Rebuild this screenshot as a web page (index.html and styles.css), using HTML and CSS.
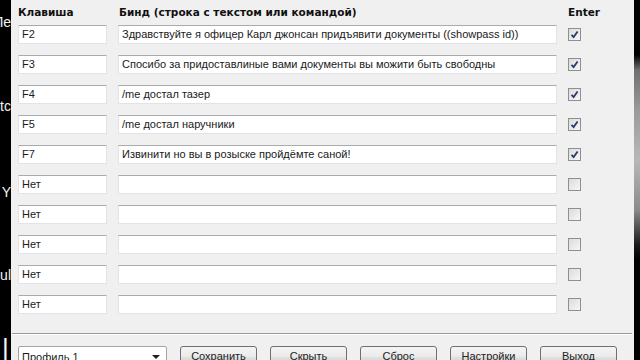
FILE: index.html
```html
<!DOCTYPE html>
<html lang="ru">
<head>
    <meta charset="UTF-8">
    <meta name="viewport" content="width=device-width, initial-scale=1.0">
    <title>Биндер</title>
    <link rel="stylesheet" href="styles.css">
</head>
<body>
    <div class="game-edge">
        <span class="frag frag-1">Пе</span>
        <span class="frag frag-2">tc</span>
        <span class="frag frag-3">Y</span>
        <span class="frag frag-4">ul</span>
        <span class="frag frag-5">|</span>
    </div>

    <div class="dialog">
        <div class="head-row">
            <span class="col-key">Клавиша</span>
            <span class="col-bind">Бинд (строка с текстом или командой)</span>
            <span class="col-enter">Enter</span>
        </div>

        <div class="bind-grid">
            <div class="field">F2</div>
            <div class="field">Здравствуйте я офицер Карл джонсан придъявити документы ((showpass id))</div>
            <div class="check checked"><svg viewBox="0 0 9 9"><path d="M1.5 4.8 L3.6 7 L7.6 1.4" /></svg></div>

            <div class="field">F3</div>
            <div class="field">Спосибо за придоставлиные вами документы вы можити быть свободны</div>
            <div class="check checked"><svg viewBox="0 0 9 9"><path d="M1.5 4.8 L3.6 7 L7.6 1.4" /></svg></div>

            <div class="field">F4</div>
            <div class="field">/me достал тазер</div>
            <div class="check checked"><svg viewBox="0 0 9 9"><path d="M1.5 4.8 L3.6 7 L7.6 1.4" /></svg></div>

            <div class="field">F5</div>
            <div class="field">/me достал наручники</div>
            <div class="check checked"><svg viewBox="0 0 9 9"><path d="M1.5 4.8 L3.6 7 L7.6 1.4" /></svg></div>

            <div class="field">F7</div>
            <div class="field">Извинити но вы в розыске пройдёмте саной!</div>
            <div class="check checked"><svg viewBox="0 0 9 9"><path d="M1.5 4.8 L3.6 7 L7.6 1.4" /></svg></div>

            <div class="field">Нет</div>
            <div class="field"></div>
            <div class="check"></div>

            <div class="field">Нет</div>
            <div class="field"></div>
            <div class="check"></div>

            <div class="field">Нет</div>
            <div class="field"></div>
            <div class="check"></div>

            <div class="field">Нет</div>
            <div class="field"></div>
            <div class="check"></div>

            <div class="field">Нет</div>
            <div class="field"></div>
            <div class="check"></div>
        </div>

        <div class="footer">
            <div class="profile">
                <span>Профиль 1</span>
                <span class="arrow"></span>
            </div>
            <div class="btn">Сохранить</div>
            <div class="btn">Скрыть</div>
            <div class="btn">Сброс</div>
            <div class="btn">Настройки</div>
            <div class="btn">Выход</div>
        </div>
    </div>

    <div class="right-edge"></div>
</body>
</html>
```

FILE: styles.css
```css
body {
    margin: 0;
    padding: 0;
    width: 640px;
    height: 360px;
    overflow: hidden;
    background-color: #000000;
    display: flex;
    font-family: "Liberation Sans", Arial, sans-serif;
    font-size: 11px;
    color: #1a1a1a;
}

/* кусок игры слева */
.game-edge {
    width: 11px;
    flex-shrink: 0;
    display: flex;
    flex-direction: column;
    overflow: hidden;
    color: #f4f4f4;
    font-size: 14px;
}

.frag {
    display: flex;
    justify-content: flex-end;
    white-space: nowrap;
    height: 16px;
    flex-shrink: 0;
}

.frag-1 { margin-top: 14px; }
.frag-2 { margin-top: 68px; }
.frag-3 { margin-top: 70px; }
.frag-4 { margin-top: 67px; }
.frag-5 {
    margin-top: 50px;
    height: 30px;
    font-size: 26px;
    justify-content: center;
}

.dialog {
    width: 623px;
    flex-shrink: 0;
    background-color: #f0f0f0;
    display: flex;
    flex-direction: column;
}

.dialog > div {
    flex-shrink: 0;
}

.head-row {
    height: 25px;
    display: grid;
    grid-template-columns: 101px 449px 60px;
    padding-left: 7px;
    font-family: "DejaVu Sans", sans-serif;
    font-weight: bold;
    font-size: 10.5px;
    line-height: 12px;
    color: #111111;
}

.head-row span {
    padding-top: 6px;
}

.bind-grid {
    display: grid;
    grid-template-columns: 89px 439px 13px;
    grid-auto-rows: 19px;
    column-gap: 11px;
    row-gap: 11px;
    padding-left: 7px;
    align-items: center;
}

.field {
    height: 19px;
    box-sizing: border-box;
    background-color: #ffffff;
    border: 1px solid #e2e3e6;
    border-top-color: #a9abaf;
    padding: 0 3px;
    line-height: 17px;
    white-space: nowrap;
    overflow: hidden;
}

.check {
    width: 13px;
    height: 13px;
    box-sizing: border-box;
    border: 1px solid #8e8f8f;
    background: linear-gradient(135deg, #dcdcdc, #f6f6f6);
    display: flex;
    align-items: center;
    justify-content: center;
}

.check svg {
    width: 9px;
    height: 9px;
}

.check path {
    fill: none;
    stroke: #2b3a6b;
    stroke-width: 1.8;
}

.footer {
    margin-top: 19px;
    margin-left: 1px;
    margin-right: 2px;
    border-top: 1px solid #9a9a9a;
    box-shadow: inset 0 1px 0 #ffffff;
    padding: 12px 0 0 6px;
    display: flex;
    gap: 13px;
}

.profile {
    width: 149px;
    height: 22px;
    box-sizing: border-box;
    background-color: #ffffff;
    border: 1px solid #a4a4a4;
    border-radius: 2px;
    display: flex;
    justify-content: space-between;
    align-items: center;
    padding: 0 6px 0 3px;
}

.arrow {
    width: 0;
    height: 0;
    border-left: 4px solid transparent;
    border-right: 4px solid transparent;
    border-top: 4px solid #202020;
}

.btn {
    width: 77px;
    height: 22px;
    box-sizing: border-box;
    border: 1px solid #707070;
    border-radius: 3px;
    background: linear-gradient(#f4f4f4 0%, #ececec 45%, #dedede 55%, #d2d2d2 100%);
    text-align: center;
    line-height: 18px;
    color: #222222;
}

.right-edge {
    width: 6px;
    flex-shrink: 0;
    background: linear-gradient(#000000 0px, #000000 55px, #6f6f6f 70px, #9a9a9a 110px, #b8b8b8 160px, #8a8a8a 210px, #1a1a1a 245px, #000000 260px);
}
```
